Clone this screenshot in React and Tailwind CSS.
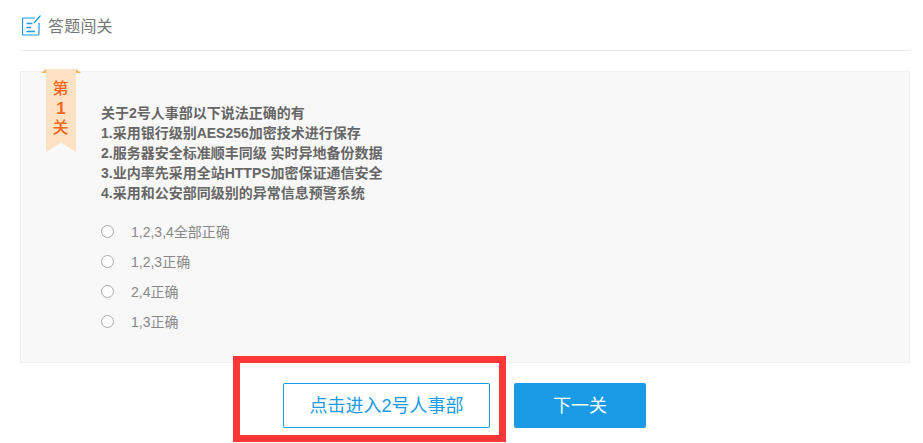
const FONT = '[font-family:"Liberation_Sans","Noto_Sans_CJK_SC",sans-serif]';

const questionLines = [
  '关于2号人事部以下说法正确的有',
  '1.采用银行级别AES256加密技术进行保存',
  '2.服务器安全标准顺丰同级 实时异地备份数据',
  '3.业内率先采用全站HTTPS加密保证通信安全',
  '4.采用和公安部同级别的异常信息预警系统',
];

const options = ['1,2,3,4全部正确', '1,2,3正确', '2,4正确', '1,3正确'];

const Ribbon = () => (
  <div className="absolute left-[20px] top-[-3px] w-[40px]">
    <svg className="absolute left-0 top-0" width="40" height="6" viewBox="0 0 40 6">
      <path d="M0 4 L5 0 L5 4 Z M35 0 L40 4 L35 4 Z" fill="#f9b25f" />
    </svg>
    <div className="relative mx-auto flex h-[83px] w-[30px] flex-col items-center bg-[#fde3c4] pt-[10px] text-[16px] font-medium leading-[20px] text-[#f9661b] [clip-path:polygon(0_0,100%_0,100%_100%,50%_89%,0_100%)]">
      <span className="pr-[1px]">第</span>
      <span className="text-[17px] font-bold leading-[19px]">1</span>
      <span className="pr-[1px]">关</span>
    </div>
  </div>
);

const App = () => {
  return (
    <div className={`relative h-[443px] w-[923px] overflow-hidden bg-white ${FONT}`}>
      {/* Header */}
      <div className="ml-5 mr-[13px] flex h-[51px] items-start border-b border-[#e9e9e9] pl-[2px] pt-[14px]">
        <svg width="19" height="22" viewBox="0 0 19 22" fill="none" stroke="#1b9be6" strokeWidth="1.2">
          <path d="M13 4 H1.5 a1 1 0 0 0 -1 1 V20 a1 1 0 0 0 1 1 H16 a1 1 0 0 0 1 -1 V9" />
          <path d="M12 9 L18.5 1.5" />
          <path d="M4.5 9.5 H10.5 M4.5 13.5 H9 M4.5 17.5 H13" strokeWidth="1.5" />
        </svg>
        <span className="ml-[7px] pt-[1px] text-[16px] leading-[24px] tracking-[0.2px] text-[#777777]">答题闯关</span>
      </div>

      {/* Question panel */}
      <div className="relative ml-5 mr-[13px] mt-5 h-[292px] border border-[#f0f0f0] bg-[#f8f8f8] pl-[80px] pt-[31px]">
        <Ribbon />
        <div className="text-[14px] font-bold leading-[20px] text-[#666666]">
          {questionLines.map(line => (
            <div key={line}>{line}</div>
          ))}
        </div>
        <div className="mt-[13px] flex flex-col">
          {options.map(option => (
            <label key={option} className="flex h-[30px] items-center text-[14px] text-[#888888]">
              <span className="h-[13px] w-[13px] rounded-full border border-[#aaaaaa] bg-white" />
              <span className="ml-[17px] pt-[3px]">{option}</span>
            </label>
          ))}
        </div>
      </div>

      {/* Buttons */}
      <div className="ml-[283px] mt-[20px] flex gap-6">
        <button className="h-[45px] w-[207px] rounded-[2px] bg-white pt-[1px] text-[18px] text-[#1b9be6] shadow-[inset_0_0_0_1px_#1b9be6]">
          点击进入2号人事部
        </button>
        <button className="h-[45px] w-[132px] rounded-[2px] bg-[#1b9be6] pt-[1px] text-[18px] text-white">
          下一关
        </button>
      </div>

      {/* Red annotation */}
      <div className="pointer-events-none absolute left-[233px] top-[356px] h-[86px] w-[273px] border-[7px] border-[#fb3737]" />
    </div>
  );
};

export default App;
